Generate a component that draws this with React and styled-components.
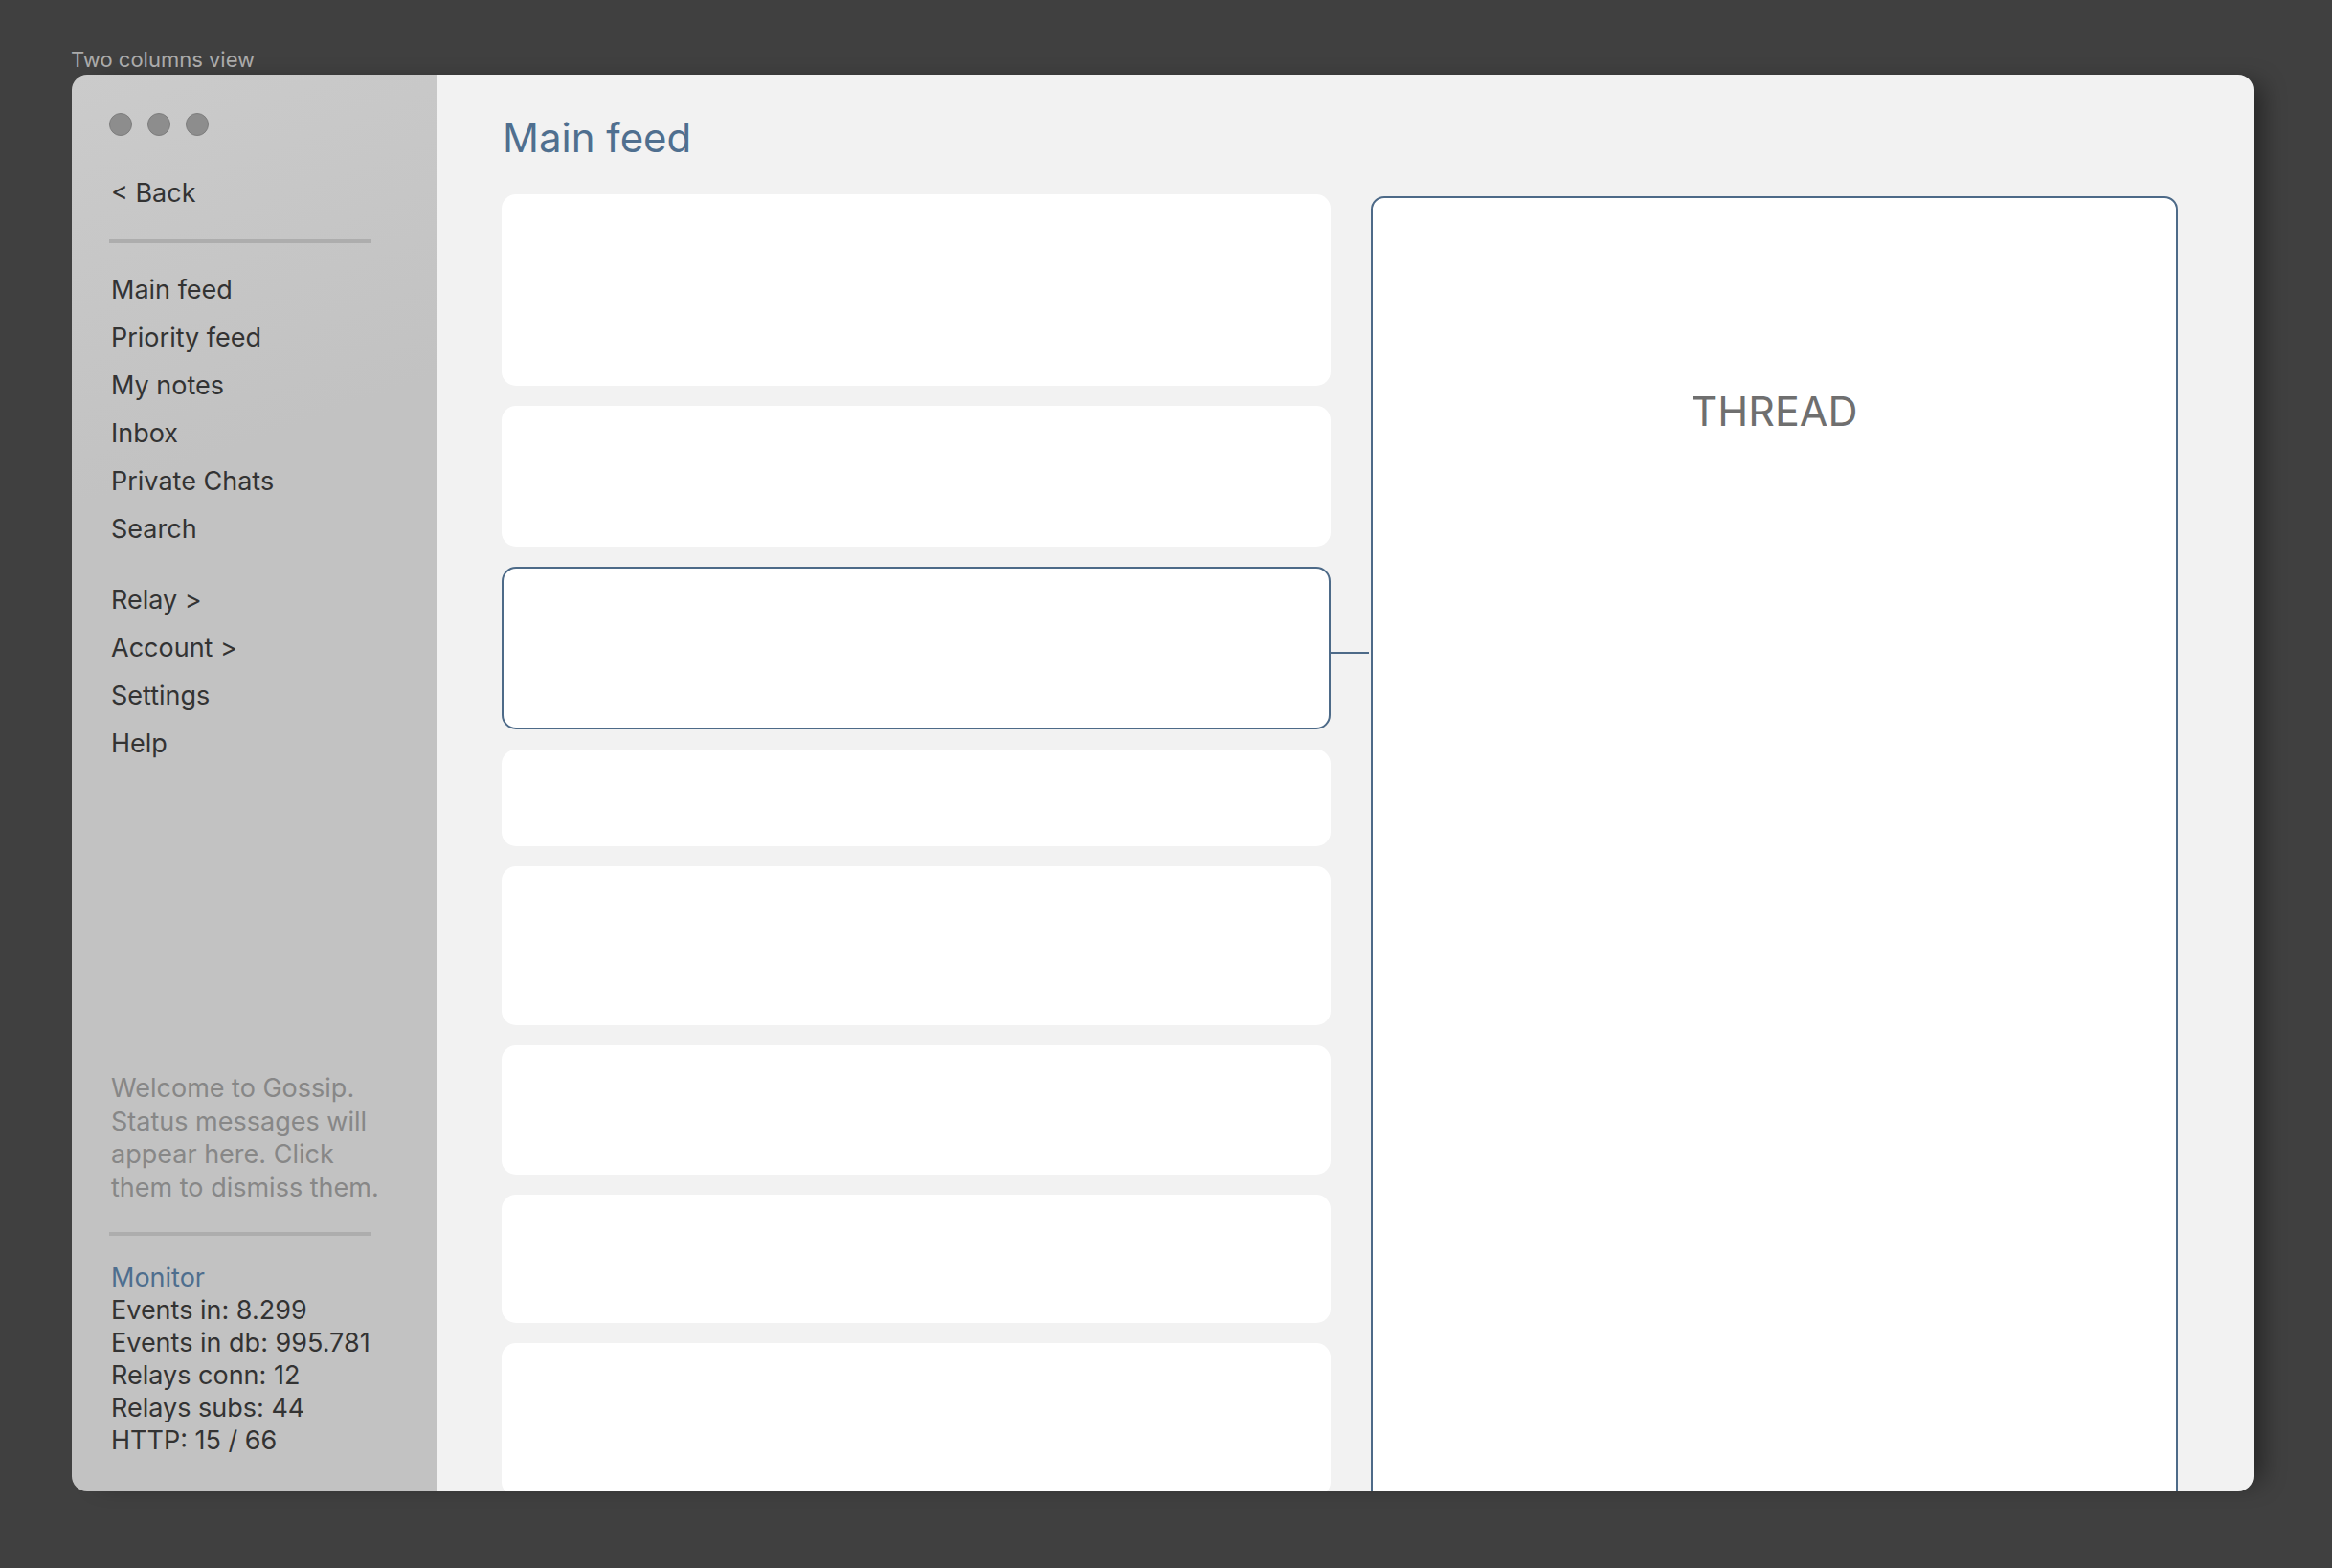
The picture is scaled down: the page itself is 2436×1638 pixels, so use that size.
import React from "react";
import styled, { createGlobalStyle } from "styled-components";

const Global = createGlobalStyle`
  html, body {
    margin: 0;
    padding: 0;
    background: #404040;
    font-family: Inter, "Noto Sans", "Liberation Sans", sans-serif;
  }
  * { box-sizing: border-box; }
`;

const Page = styled.div`
  width: 2436px;
  height: 1638px;
  padding: 48px 0 0 75px;
  overflow: hidden;
`;

const Caption = styled.div`
  font-size: 22px;
  line-height: 28px;
  color: #ababab;
  margin-bottom: 2px;
  margin-left: -1px;
`;

const Window = styled.div`
  width: 2279px;
  height: 1480px;
  border-radius: 16px;
  overflow: hidden;
  display: flex;
  box-shadow: 18px 0 26px -10px rgba(0, 0, 0, 0.45);
`;

const Sidebar = styled.aside`
  flex: 0 0 381px;
  display: flex;
  flex-direction: column;
  padding: 40px 0 36px 39px;
  background: linear-gradient(160deg, #cbcbcb 0%, #c2c2c2 28%, #c2c2c2 100%);
  color: #333333;
`;

const Lights = styled.div`
  display: flex;
  gap: 16px;
`;

const Light = styled.span`
  width: 24px;
  height: 24px;
  border-radius: 50%;
  background: #8d8d8d;
  border: 1px solid #7e7e7e;
`;

const NavItem = styled.div`
  font-size: 27px;
  line-height: 50px;
  margin-left: 2px;
  margin-top: ${(p) => p.$mt || 0}px;
  color: #333333;
`;

const Divider = styled.div`
  width: 274px;
  height: 4px;
  background: #adadad;
  margin-top: ${(p) => p.$mt || 0}px;
`;

const Bottom = styled.div`
  margin-top: auto;
  display: flex;
  flex-direction: column;
`;

const Status = styled.div`
  font-size: 27px;
  line-height: 34.5px;
  color: #878787;
  margin-left: 2px;
`;

const MonitorBlock = styled.div`
  margin-top: 27px;
  margin-left: 2px;
  font-size: 27px;
  line-height: 34px;
  color: #333333;
`;

const MonitorTitle = styled.div`
  color: #4e6e8e;
`;

const Content = styled.main`
  flex: 1;
  background: #f2f2f2;
  padding: 39px 79px 0 68px;
  display: flex;
  flex-direction: column;
`;

const Title = styled.h1`
  margin: 0 0 32px 1px;
  font-size: 42px;
  line-height: 54px;
  font-weight: 400;
  color: #4f6f8f;
`;

const Columns = styled.div`
  display: flex;
  gap: 42px;
  align-items: flex-start;
`;

const Feed = styled.div`
  flex: 0 0 866px;
  display: flex;
  flex-direction: column;
  gap: 21px;
`;

const Card = styled.div`
  position: relative;
  background: #ffffff;
  border-radius: 15px;
  border: ${(p) => (p.$selected ? "2px solid #4d6a88" : "none")};
  flex-shrink: 0;

  ${(p) =>
    p.$selected &&
    `
    &::after {
      content: "";
      position: absolute;
      left: 100%;
      top: 87px;
      width: 42px;
      height: 2px;
      background: #4d6a88;
    }
  `}
`;

const Thread = styled.section`
  flex: 1;
  height: 1500px;
  margin-top: 2px;
  background: #ffffff;
  border: 2px solid #4d6a88;
  border-radius: 14px;
  padding-top: 195px;
  text-align: center;
`;

const ThreadLabel = styled.div`
  font-size: 43px;
  line-height: 54px;
  color: #6f6f6f;
`;

const cards = [200, 147, 170, 101, 166, 135, 134, 160];

export default function App() {
  return (
    <>
      <Global />
      <Page>
        <Caption>Two columns view</Caption>
        <Window>
          <Sidebar>
            <Lights>
              <Light />
              <Light />
              <Light />
            </Lights>
            <NavItem $mt={35}>&lt; Back</NavItem>
            <Divider $mt={23} />
            <NavItem $mt={24}>Main feed</NavItem>
            <NavItem>Priority feed</NavItem>
            <NavItem>My notes</NavItem>
            <NavItem>Inbox</NavItem>
            <NavItem>Private Chats</NavItem>
            <NavItem>Search</NavItem>
            <NavItem $mt={24}>Relay &gt;</NavItem>
            <NavItem>Account &gt;</NavItem>
            <NavItem>Settings</NavItem>
            <NavItem>Help</NavItem>
            <Bottom>
              <Status>
                Welcome to Gossip.
                <br />
                Status messages will
                <br />
                appear here. Click
                <br />
                them to dismiss them.
              </Status>
              <Divider $mt={29} />
              <MonitorBlock>
                <MonitorTitle>Monitor</MonitorTitle>
                <div>Events in: 8.299</div>
                <div>Events in db: 995.781</div>
                <div>Relays conn: 12</div>
                <div>Relays subs: 44</div>
                <div>HTTP: 15 / 66</div>
              </MonitorBlock>
            </Bottom>
          </Sidebar>
          <Content>
            <Title>Main feed</Title>
            <Columns>
              <Feed>
                {cards.map((h, i) => (
                  <Card key={i} $selected={i === 2} style={{ height: h }} />
                ))}
              </Feed>
              <Thread>
                <ThreadLabel>THREAD</ThreadLabel>
              </Thread>
            </Columns>
          </Content>
        </Window>
      </Page>
    </>
  );
}
